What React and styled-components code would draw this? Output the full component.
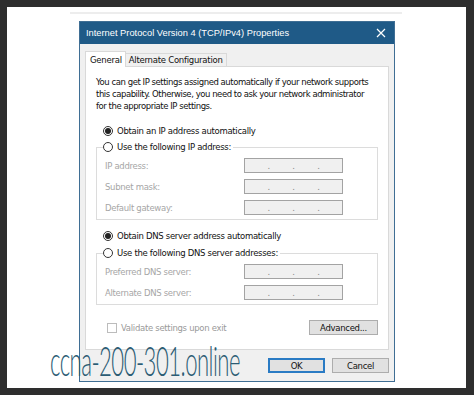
import React from 'react'
import styled, { createGlobalStyle } from 'styled-components'

const GlobalStyle = createGlobalStyle`
  html, body { margin: 0; padding: 0; background: #2e2e2e; }
  * { box-sizing: border-box; }
`

const ipRows = ['IP address:', 'Subnet mask:', 'Default gateway:']
const dnsRows = ['Preferred DNS server:', 'Alternate DNS server:']

const App = () => {
  return (
    <>
      <GlobalStyle />
      <Frame>
        <Shade />
        <Dialog>
          <TitleBar>
            <span>Internet Protocol Version 4 (TCP/IPv4) Properties</span>
            <svg width="10" height="10" viewBox="0 0 10 10">
              <path d="M1 1 L9 9 M9 1 L1 9" stroke="#fff" strokeWidth="1.2" />
            </svg>
          </TitleBar>
          <Body>
            <TabRow>
              <Tab $active>General</Tab>
              <Tab>Alternate Configuration</Tab>
            </TabRow>
            <Panel>
              <Intro>
                You can get IP settings assigned automatically if your network supports<br />
                this capability. Otherwise, you need to ask your network administrator<br />
                for the appropriate IP settings.
              </Intro>
              <RadioRow $top={12}>
                <Radio $on />
                Obtain an IP address automatically
              </RadioRow>
              <Group $top={2}>
                <Legend>
                  <Radio />
                  Use the following IP address:
                </Legend>
                {ipRows.map(l => (
                  <FieldRow key={l}>
                    <FieldLabel>{l}</FieldLabel>
                    <IpBox><i>.</i><i>.</i><i>.</i></IpBox>
                  </FieldRow>
                ))}
              </Group>
              <RadioRow $top={9}>
                <Radio $on />
                Obtain DNS server address automatically
              </RadioRow>
              <Group $top={3}>
                <Legend>
                  <Radio />
                  Use the following DNS server addresses:
                </Legend>
                {dnsRows.map(l => (
                  <FieldRow key={l}>
                    <FieldLabel>{l}</FieldLabel>
                    <IpBox><i>.</i><i>.</i><i>.</i></IpBox>
                  </FieldRow>
                ))}
              </Group>
              <BottomRow>
                <CheckLabel>
                  <Check />
                  Validate settings upon exit
                </CheckLabel>
                <Button $w={69}>Advanced...</Button>
              </BottomRow>
            </Panel>
            <Footer>
              <Button $w={57} $default>OK</Button>
              <Button $w={57}>Cancel</Button>
            </Footer>
          </Body>
        </Dialog>
        <Watermark>ccna-200-301.online</Watermark>
      </Frame>
    </>
  )
}

export default App

const Frame = styled.div`
  position: relative;
  margin: 7px;
  width: 459px;
  height: 381px;
  background: #fff;
  padding-top: 5px;
  overflow: hidden;
`

const Shade = styled.div`
  margin-left: 63px;
  width: 332px;
  height: 2px;
  background: #ededed;
`

const Dialog = styled.div`
  margin: 7px 0 0 72px;
  width: 316px;
  height: 361px;
  border: 1px solid #3f6e94;
  background: #f0f0f0;
  display: flex;
  flex-direction: column;
  font-family: "DejaVu Sans", "Liberation Sans", sans-serif;
  font-size: 8.5px;
  letter-spacing: -0.3px;
  color: #111;
`

const TitleBar = styled.div`
  height: 22px;
  background: #1f5a87;
  color: #fff;
  display: flex;
  align-items: center;
  justify-content: space-between;
  padding: 0 8px 0 6px;
  font-family: "Liberation Sans", "Noto Sans", sans-serif;
  font-size: 9.3px;
  letter-spacing: 0;
`

const Body = styled.div`
  padding: 8px 0 0 5px;
`

const TabRow = styled.div`
  display: flex;
  align-items: flex-end;
  height: 15px;
  margin-bottom: -1px;
  position: relative;
  z-index: 1;
`

const Tab = styled.div`
  height: ${p => (p.$active ? 16 : 14)}px;
  padding: 0 3px 0 ${p => (p.$active ? 4 : 3)}px;
  display: flex;
  align-items: center;
  letter-spacing: -0.25px;
  background: ${p => (p.$active ? '#fff' : '#f0f0f0')};
  border: 1px solid #d9d9d9;
  border-bottom: ${p => (p.$active ? 'none' : '1px solid #d9d9d9')};
  margin-left: ${p => (p.$active ? 0 : -1)}px;
`

const Panel = styled.div`
  width: 304px;
  height: 284px;
  background: #fff;
  border: 1px solid #d9d9d9;
  padding: 9px 0 0 10px;
`

const Intro = styled.div`
  line-height: 12px;
  white-space: nowrap;
  letter-spacing: -0.45px;
`

const RadioRow = styled.div`
  display: flex;
  align-items: center;
  gap: 4px;
  height: 14px;
  margin: ${p => p.$top}px 0 0 7px;
`

const Radio = styled.span`
  width: 10px;
  height: 10px;
  border-radius: 50%;
  border: 1px solid #333;
  background: #fff;
  display: inline-flex;
  align-items: center;
  justify-content: center;
  flex-shrink: 0;
  &::after {
    content: '';
    width: 6px;
    height: 6px;
    border-radius: 50%;
    background: ${p => (p.$on ? '#222' : 'transparent')};
  }
`

const Group = styled.fieldset`
  width: 282px;
  margin: ${p => p.$top}px 0 0;
  padding: 4px 0 4px 8px;
  border: 1px solid #dcdcdc;
  display: flex;
  flex-direction: column;
  gap: 6px;
  min-width: 0;
`

const Legend = styled.legend`
  display: flex;
  align-items: center;
  gap: 4px;
  height: 14px;
  padding: 0 2px 0 0;
  margin-left: -2px;
  background: #fff;
`

const FieldRow = styled.div`
  display: grid;
  grid-template-columns: 139px 99px;
  align-items: center;
  height: 15px;
`

const FieldLabel = styled.span`
  color: #a6a6a6;
`

const IpBox = styled.div`
  height: 15px;
  background: #f0f0f0;
  border: 1px solid #a3a3a3;
  display: flex;
  justify-content: space-evenly;
  align-items: center;
  color: #888;
  & i { font-style: normal; line-height: 1; margin-top: 1px; }
`

const BottomRow = styled.div`
  width: 282px;
  display: flex;
  align-items: center;
  justify-content: space-between;
  margin-top: 15px;
  height: 15px;
`

const CheckLabel = styled.div`
  display: flex;
  align-items: center;
  gap: 4px;
  margin-left: 11px;
  color: #9a9a9a;
`

const Check = styled.span`
  width: 10px;
  height: 10px;
  border: 1px solid #bcbcbc;
  background: #fff;
`

const Button = styled.div`
  width: ${p => p.$w}px;
  height: 15px;
  display: flex;
  align-items: center;
  justify-content: center;
  background: #e1e1e1;
  border: ${p => (p.$default ? '2px solid #2a7bc4' : '1px solid #adadad')};
`

const Footer = styled.div`
  width: 304px;
  display: flex;
  justify-content: flex-end;
  gap: 7px;
  margin-top: 8px;
`

const Watermark = styled.div`
  position: absolute;
  left: 43px;
  top: 332px;
  font-family: "Lato", "DejaVu Sans", sans-serif;
  font-weight: 300;
  font-size: 41px;
  line-height: 44px;
  letter-spacing: -1px;
  color: #2b5c74;
  transform: scaleX(0.54);
  transform-origin: left center;
  white-space: nowrap;
`
